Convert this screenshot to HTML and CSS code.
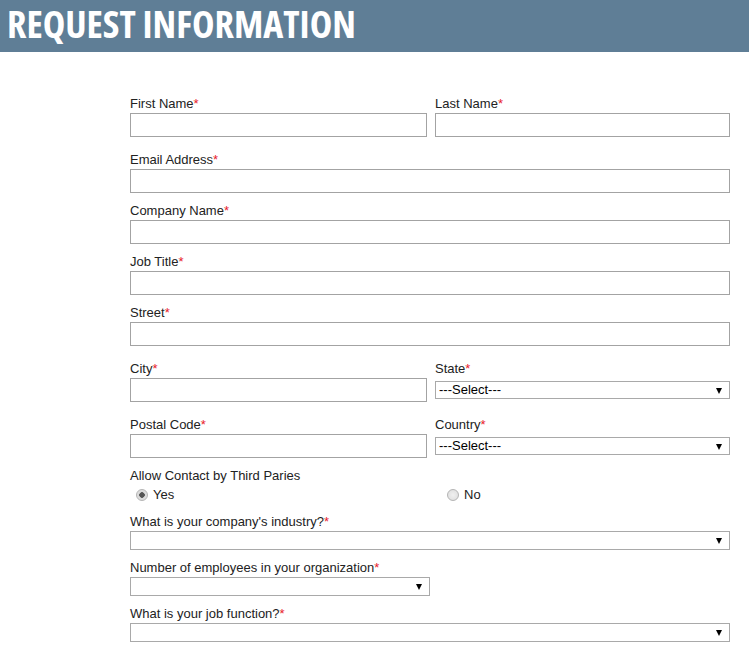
FILE: index.html
```html
<!DOCTYPE html>
<html lang="en">

<head>
  <meta charset="UTF-8">
  <meta name="viewport" content="width=device-width, initial-scale=1.0">
  <title>Request Information</title>

  <link rel="stylesheet" href="styles.css">
</head>

<body>
  <h1 class="title">REQUEST INFORMATION</h1>

  <form class="form">
    <div class="row wide-gap">
      <div class="field left">
        <label>First Name<span class="req">*</span></label>
        <input type="text">
      </div>
      <div class="field right">
        <label>Last Name<span class="req">*</span></label>
        <input type="text">
      </div>
    </div>

    <div class="row">
      <div class="field">
        <label>Email Address<span class="req">*</span></label>
        <input type="text">
      </div>
    </div>

    <div class="row">
      <div class="field">
        <label>Company Name<span class="req">*</span></label>
        <input type="text">
      </div>
    </div>

    <div class="row">
      <div class="field">
        <label>Job Title<span class="req">*</span></label>
        <input type="text">
      </div>
    </div>

    <div class="row wide-gap">
      <div class="field">
        <label>Street<span class="req">*</span></label>
        <input type="text">
      </div>
    </div>

    <div class="row wide-gap">
      <div class="field left">
        <label>City<span class="req">*</span></label>
        <input type="text">
      </div>
      <div class="field right">
        <label>State<span class="req">*</span></label>
        <div class="select half">
          <select>
            <option>---Select---</option>
          </select>
        </div>
      </div>
    </div>

    <div class="row">
      <div class="field left">
        <label>Postal Code<span class="req">*</span></label>
        <input type="text">
      </div>
      <div class="field right">
        <label>Country<span class="req">*</span></label>
        <div class="select half">
          <select>
            <option>---Select---</option>
          </select>
        </div>
      </div>
    </div>

    <div class="row radio-row">
      <div class="field">
        <label>Allow Contact by Third Paries</label>
        <div class="radios">
          <label class="opt yes"><input type="radio" name="third" checked> Yes</label>
          <label class="opt"><input type="radio" name="third"> No</label>
        </div>
      </div>
    </div>

    <div class="row">
      <div class="field">
        <label>What is your company's industry?<span class="req">*</span></label>
        <div class="select">
          <select>
            <option></option>
          </select>
        </div>
      </div>
    </div>

    <div class="row">
      <div class="field">
        <label>Number of employees in your organization<span class="req">*</span></label>
        <div class="select short">
          <select>
            <option></option>
          </select>
        </div>
      </div>
    </div>

    <div class="row">
      <div class="field">
        <label>What is your job function?<span class="req">*</span></label>
        <div class="select">
          <select>
            <option></option>
          </select>
        </div>
      </div>
    </div>
  </form>
</body>

</html>
```

FILE: styles.css
```css
* {
  margin: 0;
  padding: 0;
  box-sizing: border-box;
}

body {
  font-family: "Liberation Sans", Arial, sans-serif;
  font-size: 13px;
  color: #222;
  background-color: #fff;
}

.title {
  height: 52px;
  padding-left: 7px;
  background-color: #5f7e96;
  color: #fff;
  font-family: "Open Sans", sans-serif;
  font-stretch: 75%;
  font-weight: 700;
  font-size: 38px;
  line-height: 47px;
  white-space: nowrap;
}

.form {
  width: 600px;
  margin-left: 130px;
  padding-top: 44px;
}

.row {
  display: flex;
  gap: 8px;
  margin-bottom: 10px;
}

.row.wide-gap {
  margin-bottom: 15px;
}

.field {
  flex: 1;
}

.field.left {
  flex: 0 0 297px;
}

.field > label {
  display: block;
  line-height: 15px;
  margin-bottom: 2px;
}

.req {
  color: #e8202a;
}

input[type="text"] {
  display: block;
  width: 100%;
  height: 24px;
  border: 1px solid #a3a3a3;
  background: #fff;
  font: inherit;
  padding: 0 4px;
}

.select {
  position: relative;
  height: 19px;
}

.select.half {
  margin-top: 5px;
  height: 18px;
}

.select.short {
  width: 300px;
}

.select select {
  -webkit-appearance: none;
  appearance: none;
  display: block;
  width: 100%;
  height: 100%;
  border: 1px solid #a9a9a9;
  border-radius: 0;
  background: #fff;
  font-family: "Liberation Sans", Arial, sans-serif;
  font-size: 13px;
  color: #000;
  padding: 0 0 0 3px;
  line-height: 16px;
}

.select::after {
  content: "";
  position: absolute;
  right: 8px;
  top: 7px;
  border-left: 3.5px solid transparent;
  border-right: 3.5px solid transparent;
  border-top: 6px solid #000;
  pointer-events: none;
}

.radio-row {
  margin-bottom: 11px;
}

.radios {
  display: flex;
  margin-top: 4px;
  height: 16px;
  line-height: 16px;
}

.opt {
  display: flex;
  align-items: center;
}

.opt.yes {
  width: 311px;
  margin-left: 6px;
}

.opt input {
  -webkit-appearance: none;
  appearance: none;
  width: 12px;
  height: 12px;
  margin-right: 5px;
  border: 1px solid #b4b4b4;
  border-radius: 50%;
  background: radial-gradient(circle, #f0f0f0 0, #dcdcdc 100%);
}

.opt input:checked {
  background: radial-gradient(circle, #555 0, #555 2.5px, #d8d8d8 3px, #e6e6e6 100%);
}
```
